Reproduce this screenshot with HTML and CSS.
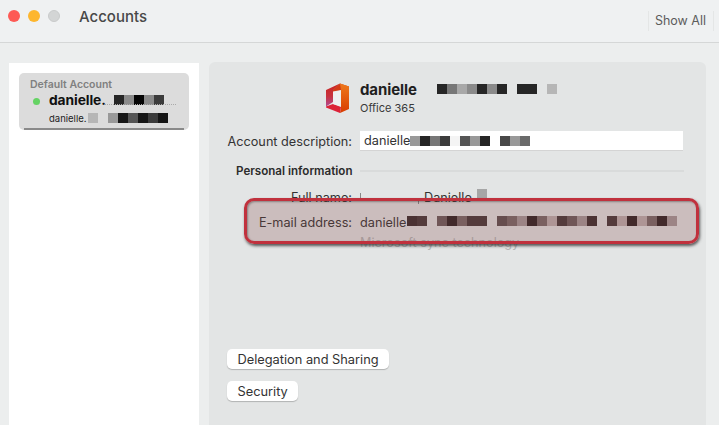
FILE: index.html
```html
<!DOCTYPE html>
<html lang="en">
<head>
<meta charset="utf-8">
<title>Accounts</title>
<link rel="stylesheet" href="styles.css">
</head>
<body>
<header class="titlebar">
  <div class="lights"><i class="light red"></i><i class="light yellow"></i><i class="light grey"></i></div>
  <h1 class="title">Accounts</h1>
  <div class="showall">Show All</div>
</header>
<main class="content">
  <aside class="sidebar">
    <div class="account">
      <div class="acc-head">Default Account</div>
      <div class="acc-name">
        <i class="dot"></i><b>danielle.</b>
        <span class="px acc-px1"><i class="k2"></i><i class="k8"></i><i class="k0"></i><i class="k8"></i><i class="k3"></i></span>
        <span class="dots"></span>
      </div>
      <div class="acc-mail">
        <span class="acc-mail-text">danielle.</span>
        <span class="px acc-px2"><i class="kb"></i><i class="gap"></i><i class="k9"></i><i class="k1"></i><i class="k5"></i><i class="k1"></i><i class="k3"></i><i class="k1"></i></span>
      </div>
    </div>
  </aside>
  <section class="panel">
    <div class="hero">
      <svg class="logo" viewBox="0 0 24 30" width="24" height="30" aria-hidden="true">
        <defs>
          <linearGradient id="o365-left" x1="0" y1="0" x2="0" y2="1">
            <stop offset="0" stop-color="#c9241f"/>
            <stop offset="0.55" stop-color="#c8323f"/>
            <stop offset="1" stop-color="#b04a92"/>
          </linearGradient>
          <linearGradient id="o365-right" x1="0" y1="0" x2="0" y2="1">
            <stop offset="0" stop-color="#ee7a1c"/>
            <stop offset="1" stop-color="#d83b01"/>
          </linearGradient>
        </defs>
        <path d="M1 7 15 0.500 8 7.500V19L1 23.500z" fill="url(#o365-left)"/>
        <path d="M15 0.500 24 3.500V8L16 7 8 8.500V7z" fill="#d43a16"/>
        <path d="M16 7 15 0.500 24 3.500V26L15 30 16 24z" fill="url(#o365-right)"/>
        <path d="M1 23.500 8 21 16 24 15 30 1 24.500z" fill="#dc2238"/>
        <path d="M8 9 16 7.500V23.500L8 21z" fill="#eeeff0"/>
      </svg>
      <div class="hero-text">
        <div class="hero-name"><b>danielle</b>
          <span class="px hero-px"><i class="k2"></i><i class="k7"></i><i class="ka"></i><i class="k8"></i><i class="k2"></i><i class="k8"></i><i class="k2"></i><i class="gap"></i><i class="k2 w20"></i><i class="gap"></i><i class="kb"></i></span>
        </div>
        <div class="hero-sub">Office 365</div>
      </div>
    </div>
    <div class="row row-desc">
      <label class="lbl">Account description:</label>
      <div class="field">danielle<span class="px desc-px"><i class="k9"></i><i class="k2"></i><i class="k7"></i><i class="k3"></i><i class="kf"></i><i class="k5"></i><i class="k9"></i><i class="k2"></i><i class="gap"></i><i class="k4"></i><i class="k9"></i><i class="k6"></i></span></div>
    </div>
    <div class="section">
      <span class="section-title">Personal information</span><span class="rule"></span>
    </div>
    <div class="row row-name">
      <label class="lbl">Full name:</label>
      <div class="val val-name"><i class="tick"></i><i class="tick tick2"></i><span>Danielle</span><i class="block"></i></div>
    </div>
    <div class="row row-mail">
      <label class="lbl">E-mail address:</label>
      <div class="val">danielle<span class="px mail-px"><i class="m3"></i><i class="m4"></i><i class="gap"></i><i class="m6"></i><i class="m2"></i><i class="m7"></i><i class="m4"></i><i class="m4"></i><i class="gap"></i><i class="m5"></i><i class="m7"></i><i class="ma"></i><i class="m2"></i><i class="m7"></i><i class="mb"></i><i class="m4"></i><i class="m6"></i><i class="ma"></i><i class="m3"></i><i class="gap"></i><i class="m4"></i><i class="mb"></i><i class="m2"></i><i class="mb"></i><i class="m7"></i><i class="m2"></i><i class="ma"></i></span></div>
    </div>
    <div class="row row-sync">
      <span class="lbl"></span>
      <div class="val sync">Microsoft sync technology</div>
    </div>
    <div class="actions">
      <button class="btn">Delegation and Sharing</button>
      <button class="btn">Security</button>
    </div>
    <div class="callout"></div>
  </section>
</main>
</body>
</html>
```
FILE: styles.css
```css
* { box-sizing: border-box; }
html, body { margin: 0; height: 100%; }
body {
  width: 719px;
  height: 425px;
  overflow: hidden;
  background: #eceeee;
  font-family: Inter, "Liberation Sans", sans-serif;
  color: #303030;
  display: flex;
  flex-direction: column;
}
i { display: block; font-style: normal; }

.titlebar {
  height: 43px;
  flex: none;
  display: flex;
  align-items: center;
  padding: 0 5px 11px 8px;
  background: #eff1f2;
  border-bottom: 1px solid #d5d7d7;
}
.lights { display: flex; gap: 8px; }
.light { width: 12px; height: 12px; border-radius: 50%; }
.red { background: #fd5a55; }
.yellow { background: #fdb62e; }
.grey { background: #d3d5d5; border: 1px solid #c9cbcb; }
.title {
  margin: 1px 0 0 19px;
  font-size: 15px;
  font-weight: 500;
  color: #484848;
}
.showall {
  margin-left: auto;
  padding: 0 7px 0 6px;
  height: 20px;
  line-height: 20px;
  font-size: 12.500px;
  color: #5c5c5c;
  border-left: 1px solid #e4e6e6;
  border-right: 1px solid #e4e6e6;
  position: relative;
  top: 5px;
}

.content {
  flex: 1;
  display: flex;
  gap: 10px;
  padding: 20px 13px 0 9px;
  min-height: 0;
}
.sidebar {
  flex: none;
  width: 190px;
  background: #fff;
  padding: 10px;
}
.account {
  height: 57px;
  background: #dcdcdc;
  border-radius: 5px;
  padding: 6px 0 0 11px;
  position: relative;
  overflow: hidden;
}
.account::after {
  content: "";
  position: absolute;
  left: 5px;
  right: 5px;
  bottom: 0;
  height: 2px;
  background: #8a8a8a;
}
.acc-head { font-size: 10.500px; line-height: 12px; font-weight: 600; color: #808080; }
.acc-name {
  display: flex;
  align-items: center;
  height: 18px;
  position: relative;
  font-size: 13.800px;
  color: #111;
}
.dot { width: 7px; height: 7px; border-radius: 50%; background: #65d364; margin: 3px 9px 0 3px; }
.acc-name b { font-weight: 700; letter-spacing: -0.1px; width: 57px; flex: none; }
.acc-mail { display: flex; align-items: center; margin: 3px 0 0 19px; font-size: 9.500px; line-height: 14px; color: #222; }
.acc-mail-text { width: 39px; flex: none; }

.px { display: inline-flex; vertical-align: top; }
.px i { width: 10px; height: 10px; flex: none; }
.px .w20 { width: 20px; }
.acc-px1 { margin-left: 8px; }
.acc-px2 { margin-top: -2px; }
.dots { position: absolute; left: 75px; top: 13px; width: 71px; border-top: 1px dotted #aaa; }

.gap { background: transparent; }
.k0 { background: #050505; } .k1 { background: #161616; } .k2 { background: #262626; }
.k3 { background: #3c3c3c; } .k4 { background: #484848; } .k5 { background: #555; }
.k6 { background: #6a6a6a; } .k7 { background: #777; } .k8 { background: #8a8a8a; }
.k9 { background: #999; } .ka { background: #a8a8a8; } .kb { background: #b6b6b6; } .kf { background: #f4f4f4; }
.m2 { background: #2d2122; } .m3 { background: #382b2c; } .m4 { background: #443738; }
.m5 { background: #5c4f50; } .m6 { background: #6a5b5c; } .m7 { background: #776869; }
.ma { background: #a5999a; } .mb { background: #bcafaf; }

.panel {
  flex: 1;
  min-width: 0;
  background: #e3e5e5;
  border-radius: 6px 6px 0 0;
  position: relative;
  margin-top: -1px;
  padding: 20px 0 0 0;
  display: flex;
  flex-direction: column;
}
.hero { display: flex; align-items: center; gap: 11px; margin-left: 116px; height: 32px; }
.hero-name { display: flex; align-items: flex-start; font-size: 15px; line-height: 18px; color: #1f1f1f; }
.hero-name b { font-weight: 700; letter-spacing: -0.1px; }
.hero-px { margin: 3px 0 0 20px; }
.hero-sub { font-size: 11px; line-height: 15px; color: #3a3a3a; margin-top: 2px; }

.row { display: flex; align-items: center; }
.lbl { width: 143px; text-align: right; font-size: 12.700px; color: #333; flex: none; }
.row-desc { margin-top: 17px; height: 20px; }
.field {
  margin-left: 8px;
  width: 323px;
  height: 20px;
  background: #fff;
  border-bottom: 1px solid #d4d4d4;
  padding-left: 4px;
  display: flex;
  align-items: center;
  font-size: 12.700px;
  color: #333;
}
.section { display: flex; align-items: center; margin-top: 11px; height: 18px; padding-left: 27px; }
.section-title { width: 124px; flex: none; font-size: 11.600px; font-weight: 600; color: #2c2c2c; }
.rule { width: 324px; height: 2px; background: #d9dbdb; }
.row-name { margin-top: 8px; height: 18px; }
.val { margin-left: 8px; display: flex; align-items: center; font-size: 12.700px; color: #333; }
.tick { width: 1px; height: 8px; background: #888; }
.tick2 { margin: 10px 5px 0 57px; height: 4px; }
.block { width: 10px; height: 10px; background: #a6a6a6; margin: -6px 0 0 5px; }
.row-mail { margin-top: 7px; height: 18px; }
.row-sync { margin-top: 2px; height: 18px; }
.sync { color: #b3b5b5; }
.mail-px { margin: -3px 0 0 1px; }

.actions { display: flex; flex-direction: column; align-items: flex-start; gap: 12px; margin: 98px 0 0 18px; }
.btn {
  height: 20px;
  padding: 0 10.500px;
  border: 0;
  border-radius: 5px;
  background: #fff;
  box-shadow: 0 1px 1px rgba(0, 0, 0, .22);
  font: 400 12.800px Inter, "Liberation Sans", sans-serif;
  color: #333;
}
.callout {
  position: absolute;
  left: 35px;
  top: 136px;
  width: 455px;
  height: 46px;
  border: 3px solid #c0313d;
  border-radius: 10px;
  background: rgba(130, 70, 70, .25);
  box-shadow: 1px 2px 3px rgba(40, 40, 40, .75), inset 1px 1px 2px rgba(40, 40, 40, .4);
}
```
